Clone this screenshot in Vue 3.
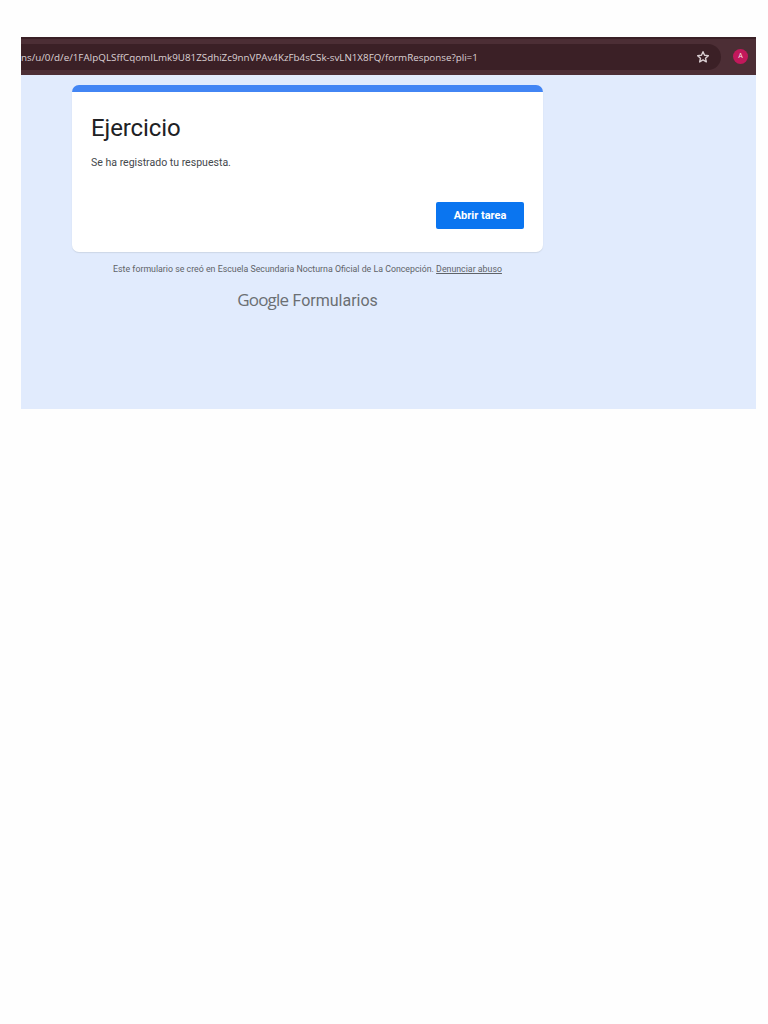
<template>
  <div class="page">
    <div class="shot">
      <div class="toolbar">
        <div class="omnibox">
          <span class="url">ns/u/0/d/e/1FAIpQLSffCqomILmk9U81ZSdhiZc9nnVPAv4KzFb4sCSk-svLN1X8FQ/formResponse?pli=1</span>
          <svg class="star" width="14" height="14" viewBox="0 0 24 24" fill="none" stroke="#d9ced1" stroke-width="2.4" stroke-linejoin="round">
            <path d="M12 3l2.7 6 6.5.7-4.9 4.3 1.4 6.4L12 17.1l-5.7 3.3 1.4-6.4-4.9-4.3 6.5-.7z" />
          </svg>
        </div>
        <div class="avatar">A</div>
      </div>
      <div class="content">
        <div class="card">
          <h1>Ejercicio</h1>
          <p class="msg">Se ha registrado tu respuesta.</p>
          <div class="actions">
            <button class="open">Abrir tarea</button>
          </div>
        </div>
        <p class="note">Este formulario se creó en Escuela Secundaria Nocturna Oficial de La Concepción. <a>Denunciar abuso</a></p>
        <div class="brand"><span class="google">Google</span> <span class="forms">Formularios</span></div>
      </div>
    </div>
  </div>
</template>

<script setup>
</script>

<style>
body {
  background: #fefefe;
}
</style>

<style scoped>
.page {
  height: 1024px;
  padding: 37px 12px 0 21px;
  box-sizing: border-box;
  font-family: Roboto, "Liberation Sans", sans-serif;
}
.shot {
  height: 372px;
  background: #e1ebfd;
  overflow: hidden;
}
.toolbar {
  height: 38px;
  box-sizing: border-box;
  background: #4c2e35;
  border-top: 2px solid #3a2026;
  padding-top: 5px;
  display: flex;
  align-items: flex-start;
}
.omnibox {
  width: 700px;
  height: 26px;
  background: #3b2026;
  border-radius: 0 13px 13px 0;
  display: flex;
  align-items: center;
  justify-content: space-between;
  padding-right: 11px;
  box-sizing: border-box;
  overflow: hidden;
}
.url {
  font-family: "Open Sans", sans-serif;
  font-size: 9.8px;
  color: #dcd2d5;
  white-space: nowrap;
}
.star {
  flex: none;
}
.avatar {
  width: 15px;
  height: 15px;
  margin: 5px 0 0 12px;
  border-radius: 50%;
  background: #c2185b;
  color: #fbe4ec;
  font-size: 7px;
  line-height: 15px;
  text-align: center;
}
.content {
  width: 471px;
  margin: 10px 0 0 51px;
}
.card {
  height: 167px;
  box-sizing: border-box;
  background: #fff;
  border-top: 7px solid #4285f4;
  border-radius: 7px;
  box-shadow: 0 1px 1px rgba(60, 64, 67, 0.12);
  padding: 22px 19px 0;
}
h1 {
  margin: 0;
  font-size: 24px;
  letter-spacing: -0.1px;
  font-weight: 400;
  line-height: 28px;
  color: #202124;
}
.msg {
  margin: 14px 0 0;
  font-size: 10.55px;
  line-height: 14px;
  color: #44484c;
}
.actions {
  display: flex;
  justify-content: flex-end;
  margin-top: 32px;
}
.open {
  width: 88px;
  height: 27px;
  padding: 0;
  border: none;
  border-radius: 2px;
  background: #0a75f0;
  color: #fff;
  font-family: Roboto, sans-serif;
  font-size: 11px;
  font-weight: 700;
}
.note {
  margin: 11px 0 0;
  font-size: 8.8px;
  line-height: 12px;
  text-align: center;
  color: #5f6368;
  white-space: nowrap;
}
.note a {
  text-decoration: underline;
}
.brand {
  margin-top: 13px;
  text-align: center;
  font-size: 17px;
  line-height: 24px;
  color: #6b6f73;
}
.google {
  font-family: "Open Sans", sans-serif;
  font-weight: 500;
  letter-spacing: -0.8px;
}
.forms {
  font-family: Roboto, sans-serif;
  font-size: 16px;
}
</style>
